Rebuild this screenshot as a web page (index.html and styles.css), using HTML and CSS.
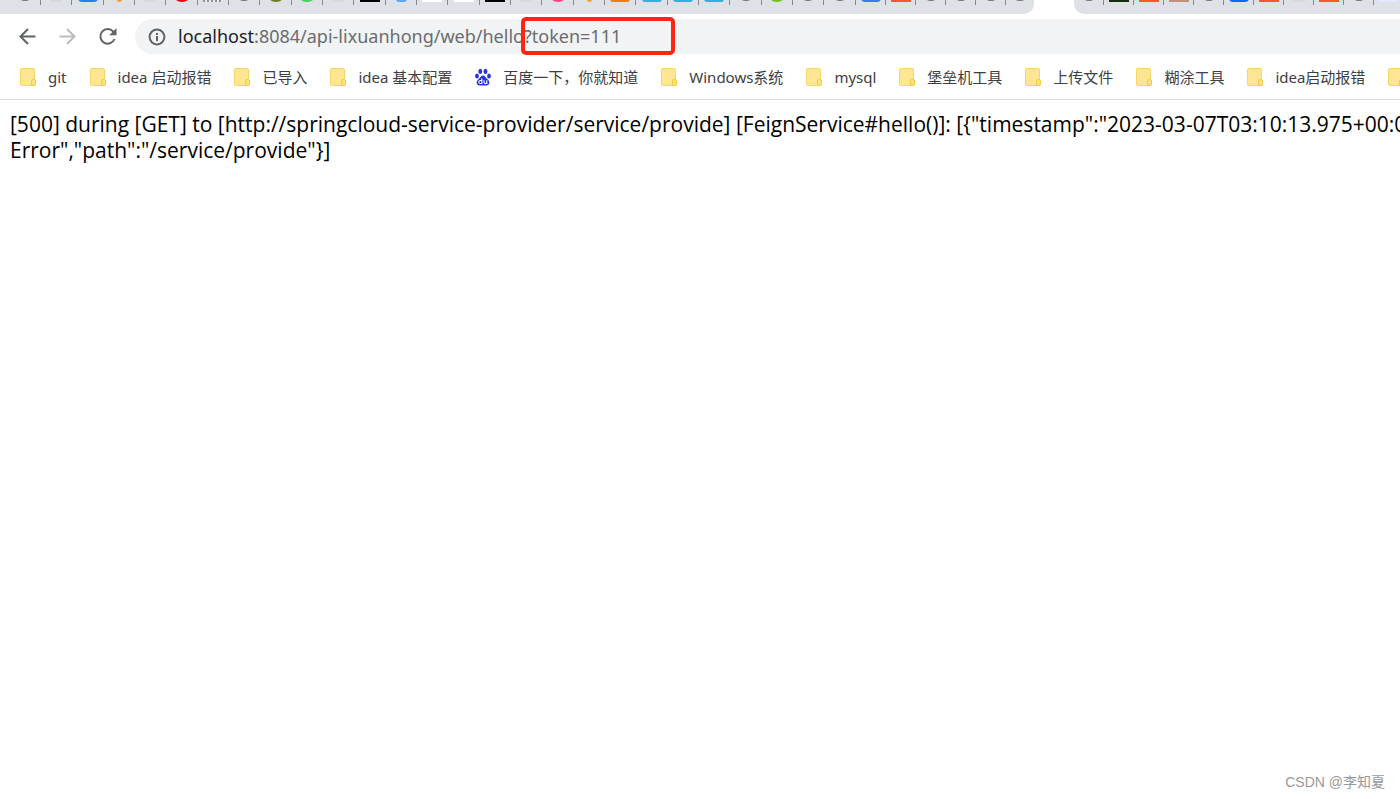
FILE: index.html
```html
<!DOCTYPE html>
<html lang="zh-CN">

<head>
  <meta charset="UTF-8">
  <meta name="viewport" content="width=device-width, initial-scale=1.0">
  <title>localhost:8084</title>
  <link rel="stylesheet" href="styles.css">
</head>

<body>
  <svg class="sprite" aria-hidden="true">
    <symbol id="folder" viewBox="0 0 16 18">
      <path d="M.5 1.500q0-1 1-1h12q1 0 1 1v10l1 1v4q0 1-1 1h-13q-1 0-1-1z" fill="#ffe694" stroke="#f8d568" />
      <path d="M11.500 17.500v-5q0-1 1-1h1.500q1.500 0 1.500 1.500v3q0 1.500-1.500 1.500z" fill="#ffe27a" stroke="#f3cb45" />
    </symbol>
  </svg>

  <!-- Tab strip -->
  <div class="tab-strip">
    <div class="tab-group left">
      <span class="tab"><i class="favicon globe"></i></span>
      <span class="tab"><i class="favicon faint"></i></span>
      <span class="tab"><i class="favicon blue"></i></span>
      <span class="tab"><i class="favicon dot"></i></span>
      <span class="tab"><i class="favicon faint"></i></span>
      <span class="tab"><i class="favicon round red"></i></span>
      <span class="tab"><i class="favicon dashed"></i></span>
      <span class="tab"><i class="favicon globe"></i></span>
      <span class="tab"><i class="favicon round olive"></i></span>
      <span class="tab"><i class="favicon round green"></i></span>
      <span class="tab"><i class="favicon faint"></i></span>
      <span class="tab"><i class="favicon black"></i></span>
      <span class="tab"><i class="favicon star"></i></span>
      <span class="tab"><i class="favicon white"></i></span>
      <span class="tab"><i class="favicon white"></i></span>
      <span class="tab"><i class="favicon black"></i></span>
      <span class="tab"><i class="favicon faint"></i></span>
      <span class="tab"><i class="favicon round pink"></i></span>
      <span class="tab"><i class="favicon dot"></i></span>
      <span class="tab"><i class="favicon orange"></i></span>
      <span class="tab"><i class="favicon cyan"></i></span>
      <span class="tab"><i class="favicon cyan"></i></span>
      <span class="tab"><i class="favicon cyan"></i></span>
      <span class="tab"><i class="favicon globe"></i></span>
      <span class="tab"><i class="favicon round lime"></i></span>
      <span class="tab"><i class="favicon globe"></i></span>
      <span class="tab"><i class="favicon globe"></i></span>
      <span class="tab small"><i class="favicon indigo"></i></span>
      <span class="tab small"><i class="favicon csdn"></i></span>
      <span class="tab small"><i class="favicon globe"></i></span>
      <span class="tab small"><i class="favicon globe"></i></span>
      <span class="tab small"><i class="favicon globe"></i></span>
      <span class="tab small"><i class="favicon globe"></i></span>
    </div>
    <div class="tab-active"></div>
    <div class="tab-group right">
      <span class="tab small"><i class="favicon globe"></i></span>
      <span class="tab small"><i class="favicon forest"></i></span>
      <span class="tab small"><i class="favicon csdn"></i></span>
      <span class="tab small"><i class="favicon tan"></i></span>
      <span class="tab small"><i class="favicon globe"></i></span>
      <span class="tab small"><i class="favicon azure"></i></span>
      <span class="tab small"><i class="favicon csdn"></i></span>
      <span class="tab small"><i class="favicon faint"></i></span>
      <span class="tab small"><i class="favicon csdn"></i></span>
      <span class="tab small"><i class="favicon globe"></i></span>
      <span class="tab small"><i class="favicon lavender"></i></span>
    </div>
  </div>

  <!-- Address bar -->
  <div class="toolbar">
    <button class="nav-button" type="button" aria-label="Back">
      <svg width="20" height="20" viewBox="0 0 20 20" fill="none" stroke="#5f6368" stroke-width="2"><path d="M17.500 9.500H2.500M10 2 2.500 9.500 10 17" /></svg>
    </button>
    <button class="nav-button" type="button" aria-label="Forward" disabled>
      <svg width="20" height="20" viewBox="0 0 20 20" fill="none" stroke="#babcbe" stroke-width="2"><path d="M1.500 9.500h15M9 2l7.500 7.500L9 17" /></svg>
    </button>
    <button class="nav-button" type="button" aria-label="Reload">
      <svg width="20" height="20" viewBox="0 0 20 20"><path d="M16.500 12a7.300 7.300 0 1 1-1.200-7.400" fill="none" stroke="#5f6368" stroke-width="2" /><path d="M18.500 1v7.300h-7.300z" fill="#5f6368" /></svg>
    </button>
    <div class="omnibox">
      <svg class="info" width="18" height="18" viewBox="0 0 18 18"><circle cx="9" cy="9" r="7.400" fill="none" stroke="#5f6368" stroke-width="2" /><path d="M8 8h2v5H8zM8 5h2v2H8z" fill="#5f6368" /></svg>
      <label for="url">localhost</label>
      <input id="url" type="text" value=":8084/api-lixuanhong/web/hello?token=111" spellcheck="false">
      <div class="highlight"></div>
    </div>
  </div>

  <!-- Bookmarks -->
  <nav class="bookmarks">
    <a href="#"><svg><use href="#folder" /></svg>git</a>
    <a href="#"><svg><use href="#folder" /></svg>idea 启动报错</a>
    <a href="#"><svg><use href="#folder" /></svg>已导入</a>
    <a href="#"><svg><use href="#folder" /></svg>idea 基本配置</a>
    <a href="#"><svg viewBox="0 0 16 18" fill="#2932e1">
      <ellipse cx="2" cy="8" rx="1.900" ry="2.500" />
      <ellipse cx="5.300" cy="3.400" rx="1.900" ry="2.600" />
      <ellipse cx="10.500" cy="3.400" rx="1.900" ry="2.600" />
      <ellipse cx="14" cy="8" rx="1.900" ry="2.500" />
      <path d="M8 7.500c2 0 2.700 2 4 3.300 1.500 1.400 2.700 2.600 2.200 4.600-.6 2.300-3 2.100-6.200 2.100s-5.600.2-6.200-2.100c-.5-2 .7-3.200 2.200-4.600C5.300 9.500 6 7.500 8 7.500z" />
      <path d="M6.800 10.500v5H5.300c-2 0-2-3 0-3h1.500M9 12.300v2q0 1.200 1.200 1.200h1.600v-3.200" fill="none" stroke="#fff" stroke-width="1.100" />
    </svg>百度一下，你就知道</a>
    <a href="#"><svg><use href="#folder" /></svg>Windows系统</a>
    <a href="#"><svg><use href="#folder" /></svg>mysql</a>
    <a href="#"><svg><use href="#folder" /></svg>堡垒机工具</a>
    <a href="#"><svg><use href="#folder" /></svg>上传文件</a>
    <a href="#"><svg><use href="#folder" /></svg>糊涂工具</a>
    <a href="#"><svg><use href="#folder" /></svg>idea启动报错</a>
    <a href="#" aria-label="More"><svg><use href="#folder" /></svg></a>
  </nav>

  <main class="response">[500] during [GET] to [http://springcloud-service-provider/service/provide] [FeignService#hello()]: [{"timestamp":"2023-03-07T03:10:13.975+00:00<br>Error","path":"/service/provide"}]</main>

  <footer class="watermark">CSDN @李知夏</footer>
</body>

</html>
```
FILE: styles.css
```css
* {
  box-sizing: border-box;
}

body {
  margin: 0;
  min-height: 100vh;
  display: flex;
  flex-direction: column;
  overflow: hidden;
  background: #ffffff;
  font-family: "Noto Sans", "Noto Sans CJK SC", sans-serif;
}

.sprite {
  display: none;
}

/* Tab strip */
.tab-strip {
  display: flex;
  height: 14px;
  overflow: hidden;
}

.tab-group {
  display: flex;
  flex: none;
  background: #dee1e6;
  overflow: hidden;
}

.tab-group.left {
  padding-left: 10px;
  border-bottom-right-radius: 10px;
}

.tab-group.right {
  flex: 1;
  border-bottom-left-radius: 10px;
}

.tab-active {
  flex: none;
  width: 40px;
}

.tab {
  flex: none;
  display: flex;
  justify-content: center;
  width: 31px;
  height: 5px;
  border-right: 1px solid #85878b;
}

.tab:nth-child(3n) {
  width: 32px;
}

.tab.small {
  width: 30px;
}

.tab:last-child {
  width: 28px;
  border-right: none;
}

/* only the lower edge of each icon shows */
.favicon {
  width: 20px;
  height: 20px;
  margin-top: -18px;
}

.round {
  border-radius: 50%;
}

.globe {
  width: 18px;
  height: 18px;
  margin-top: -17px;
  border: 2px solid #6f7378;
  border-radius: 50%;
}

.faint { background: #d6d9df; width: 12px; }
.blue { background: #1a84ff; border-radius: 4px; }
.red { background: #e60012; }
.olive { background: #6b7d24; }
.green { background: #3ccf5a; }
.black { background: #000000; }
.white { background: #ffffff; }
.pink { background: #ff4088; }
.orange { background: #ee7d1a; border-radius: 3px; }
.cyan { background: #35b0dc; border-radius: 3px; }
.lime { background: #72c01c; }
.indigo { background: #3f74ff; border-radius: 4px; }
.csdn { background: #fc5531; }
.forest { background: #16300f; }
.tan { background: #c08f80; }
.azure { background: #0a66ff; border-radius: 4px; }
.lavender { background: #e4e6ff; }
.dot { background: #f79a32; width: 5px; border-radius: 3px; }
.star { background: #5aa5f5; width: 11px; border-radius: 3px; }
.dashed { background: repeating-linear-gradient(90deg, #8d8f93 0 2px, #e8eaed 2px 4px); }

/* Address bar */
.toolbar {
  display: flex;
  align-items: center;
  gap: 20px;
  height: 45px;
  padding-left: 18px;
}

.nav-button {
  display: flex;
  flex: none;
  padding: 0;
  border: none;
  background: none;
  cursor: pointer;
}

.omnibox {
  position: relative;
  display: flex;
  flex: 1;
  align-items: center;
  height: 35px;
  margin-left: -3px;
  padding-left: 13px;
  border-radius: 18px 0 0 18px;
  background: #f1f3f4;
  font-size: 18px;
  color: #202124;
}

.info {
  margin-right: 12px;
}

.omnibox label,
.omnibox input {
  padding: 0 0 2px;
}

.omnibox input {
  flex: 1;
  min-width: 0;
  border: none;
  outline: none;
  background: none;
  font: inherit;
  color: #6a6d71;
}

.highlight {
  position: absolute;
  top: -2px;
  left: 386px;
  width: 154px;
  height: 38px;
  border: 4px solid #ff2414;
  border-radius: 5px;
  pointer-events: none;
}

/* Bookmarks */
.bookmarks {
  display: flex;
  align-items: center;
  gap: 23px;
  height: 41px;
  padding: 0 0 4px 20px;
  border-bottom: 1px solid #dadce0;
  overflow: hidden;
}

.bookmarks a {
  display: flex;
  flex: none;
  align-items: center;
  gap: 12px;
  font-size: 15px;
  line-height: 22px;
  color: #3c4043;
  text-decoration: none;
  white-space: nowrap;
}

.bookmarks svg {
  width: 16px;
  height: 18px;
}

/* Page content */
.response {
  flex: 1;
  padding: 11px 0 0 10px;
  font-family: "Open Sans", sans-serif;
  font-size: 21px;
  line-height: 26px;
  color: #000000;
  white-space: nowrap;
}

.watermark {
  padding: 0 15px 6px 0;
  font-family: "Liberation Sans", "Noto Sans CJK SC", sans-serif;
  font-size: 14px;
  line-height: 22px;
  color: #999999;
  text-align: right;
}
```
